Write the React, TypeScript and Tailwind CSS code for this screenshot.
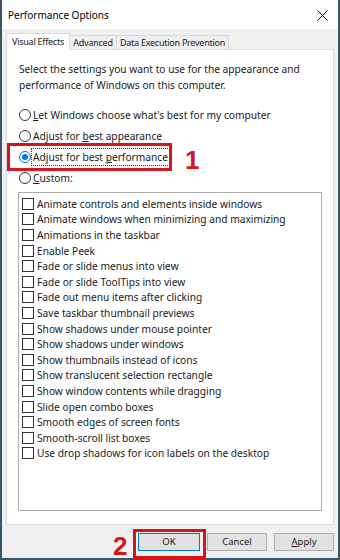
import React from 'react'

const effects = [
  'Animate controls and elements inside windows',
  'Animate windows when minimizing and maximizing',
  'Animations in the taskbar',
  'Enable Peek',
  'Fade or slide menus into view',
  'Fade or slide ToolTips into view',
  'Fade out menu items after clicking',
  'Save taskbar thumbnail previews',
  'Show shadows under mouse pointer',
  'Show shadows under windows',
  'Show thumbnails instead of icons',
  'Show translucent selection rectangle',
  'Show window contents while dragging',
  'Slide open combo boxes',
  'Smooth edges of screen fonts',
  'Smooth-scroll list boxes',
  'Use drop shadows for icon labels on the desktop',
]

function Radio({ checked, children }: { checked?: boolean; children: React.ReactNode }) {
  return (
    <div className="flex h-[21px] items-center gap-[1px] pl-px">
      <span
        className={
          'flex h-[12px] w-[12px] shrink-0 items-center justify-center rounded-full border bg-white ' +
          (checked ? 'border-[#0078d7]' : 'border-[#333]')
        }
      >
        {checked ? <span className="h-[6px] w-[6px] rounded-full bg-[#0078d7]" /> : null}
      </span>
      <span className={checked ? 'outline outline-1 outline-dotted outline-[#333] px-px' : 'px-px'}>
        {children}
      </span>
    </div>
  )
}

export default function App() {
  return (
    <div
      className="flex h-[560px] w-[340px] flex-col border-x-2 border-b-2 border-[#3b5666] bg-[#f0f0f0] text-[10.2px] leading-[16px] text-[#1a1a1a]"
      style={{ fontFamily: '"Noto Sans", "Segoe UI", sans-serif' }}
    >
      {/* Title bar */}
      <div className="flex h-[29px] shrink-0 items-center justify-between bg-white pl-[6px] pr-[10px]">
        <span className="text-[10px] text-black">Performance Options</span>
        <svg width="11" height="11" viewBox="0 0 11 11" className="mt-[1px]">
          <path d="M0.5 0.5 L10.5 10.5 M10.5 0.5 L0.5 10.5" stroke="#111" strokeWidth="1" />
        </svg>
      </div>

      <div className="flex flex-1 flex-col px-[4px] pt-[4px]">
        {/* Tabs */}
        <div className="flex h-[16px] items-end whitespace-nowrap text-[9px] tracking-[-0.25px]">
          <div className="relative z-10 -mb-px flex h-[17px] w-[64px] items-center justify-center border border-b-0 border-[#d9d9d9] bg-white">
            Visual Effects
          </div>
          <div className="flex h-[14px] w-[47px] items-center justify-center border border-l-0 border-b-0 border-[#d9d9d9] bg-[#f0f0f0]">
            Advanced
          </div>
          <div className="flex h-[14px] w-[112px] items-center justify-center border border-l-0 border-b-0 border-[#d9d9d9] bg-[#f0f0f0]">
            Data Execution Prevention
          </div>
        </div>

        {/* Panel */}
        <div className="relative flex h-[476px] flex-col border border-[#d9d9d9] bg-white px-[11px] pt-[11px]">
          <p className="pl-px pr-[20px]">
            Select the settings you want to use for the appearance and performance of Windows on this computer.
          </p>

          <div className="mt-[11px] flex flex-col">
            <Radio>
              <u>L</u>et Windows choose what&apos;s best for my computer
            </Radio>
            <Radio>
              Adjust for <u>b</u>est appearance
            </Radio>
            <div className="relative">
              <Radio checked>
                Adjust for best <u>p</u>erformance
              </Radio>
              <div className="pointer-events-none absolute left-[-11px] top-[-3px] h-[28px] w-[165px] border-[3px] border-[#d4161c]" />
              <span
                className="absolute left-[167px] top-[1px] text-[26px] font-bold leading-none text-[#d4161c]"
                style={{ fontFamily: '"Liberation Sans", Arial, sans-serif' }}
              >
                1
              </span>
            </div>
            <Radio>
              <u>C</u>ustom:
            </Radio>
          </div>

          <div className="mt-[4px] h-[319px] border border-[#adadad] pl-[3px] pt-[3px]">
            {effects.map((e) => (
              <div key={e} className="flex h-[15.6px] items-center gap-[3px] whitespace-nowrap">
                <span className="h-[12px] w-[12px] shrink-0 border border-[#333] bg-white" />
                <span>{e}</span>
              </div>
            ))}
          </div>
        </div>

        {/* Buttons */}
        <div className="relative flex justify-end gap-[7px] pt-[8px]">
          <span
            className="absolute left-[107px] top-[8px] text-[26px] font-bold leading-none text-[#d4161c]"
            style={{ fontFamily: '"Liberation Sans", Arial, sans-serif' }}
          >
            2
          </span>
          <div className="relative">
            <button className="flex h-[18px] w-[62px] items-center justify-center border border-[#0078d7] bg-[#e1e1e1] text-[9.5px]">
              OK
            </button>
            <div className="pointer-events-none absolute left-[-5px] top-[-4px] h-[30px] w-[73px] border-[3px] border-[#d4161c]" />
          </div>
          <button className="flex h-[18px] w-[60px] items-center justify-center border border-[#adadad] bg-[#e1e1e1] text-[9.5px]">
            Cancel
          </button>
          <button className="flex h-[18px] w-[60px] items-center justify-center border border-[#adadad] bg-[#e1e1e1] text-[9.5px]">
            <u>A</u>pply
          </button>
        </div>
      </div>
    </div>
  )
}
